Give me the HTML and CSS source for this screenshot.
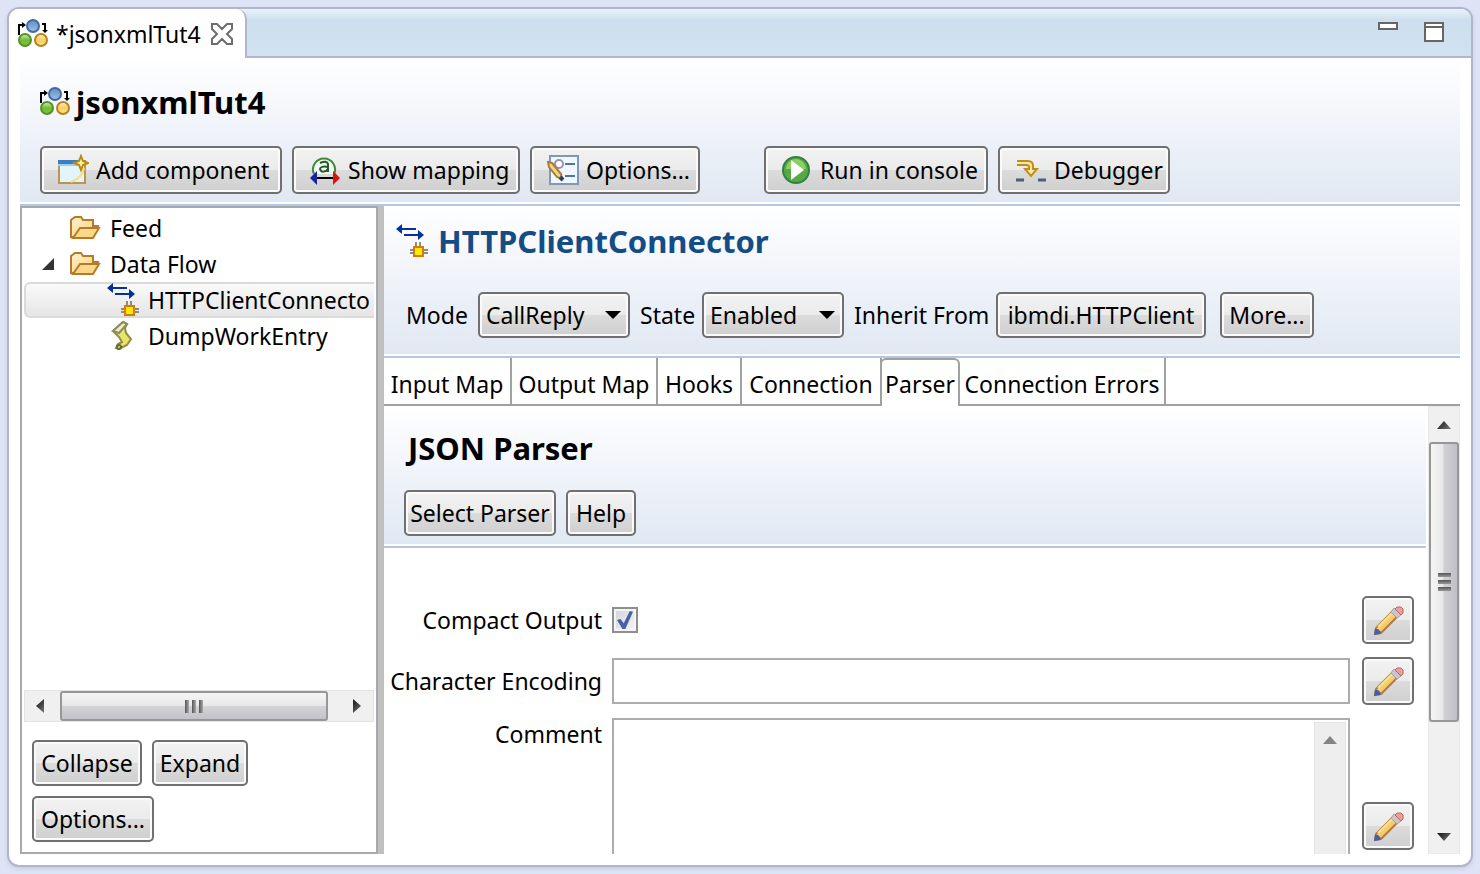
FILE: index.html
```html
<!DOCTYPE html>
<html lang="en">
<head>
    <meta charset="UTF-8">
    <meta name="viewport" content="width=device-width, initial-scale=1.0">
    <title>jsonxmlTut4</title>
    <link rel="stylesheet" href="styles.css">
</head>
<body>

    <!-- shared icons -->
    <svg class="sprite" width="0" height="0" aria-hidden="true">
        <defs>
            <linearGradient id="g-blue" x1="0" y1="0" x2="0" y2="1"><stop offset="0" stop-color="#5f8cc4"/><stop offset="1" stop-color="#9dc3e4"/></linearGradient>
            <linearGradient id="g-green" x1="0" y1="0" x2="0" y2="1"><stop offset="0" stop-color="#d5efb5"/><stop offset=".5" stop-color="#6fbd2c"/><stop offset="1" stop-color="#7cc63c"/></linearGradient>
            <linearGradient id="g-gold" x1="0" y1="0" x2="0" y2="1"><stop offset="0" stop-color="#fdf0b8"/><stop offset=".5" stop-color="#fbcf62"/><stop offset="1" stop-color="#fde391"/></linearGradient>
            <linearGradient id="g-folder" x1="0" y1="0" x2="1" y2="1"><stop offset="0" stop-color="#fff3cf"/><stop offset="1" stop-color="#f8cd73"/></linearGradient>
            <linearGradient id="g-pencil" x1="0" y1="0" x2="1" y2="1"><stop offset="0" stop-color="#fff0a0"/><stop offset="1" stop-color="#e9a93c"/></linearGradient>
        </defs>
        <symbol id="flow" viewBox="0 0 32 32">
            <path d="M2 17V7h5M25 6h3v8" fill="none" stroke="#000" stroke-width="2"/>
            <path d="M5 4l4 3-4 3zM25 12h6l-3 3z"/>
            <circle cx="16" cy="8" r="6" fill="url(#g-blue)" stroke="#4468a5" stroke-width="2"/>
            <circle cx="8" cy="22" r="6" fill="url(#g-green)" stroke="#55912c" stroke-width="2"/>
            <circle cx="24" cy="22" r="6" fill="url(#g-gold)" stroke="#b5841f" stroke-width="2"/>
        </symbol>
        <symbol id="connector" viewBox="0 0 34 38">
            <path d="M5 7h17M10 13h15" stroke="#06309c" stroke-width="2"/>
            <path d="M2 7l6-5v10zM30 13l-6-5v10z" fill="#06309c"/>
            <path d="M22 20v5M26 20v5M16 28h18M16 31h18" stroke="#8a8a8a" stroke-width="2"/>
            <rect x="20" y="25" width="9" height="9" fill="#ffea00" stroke="#d57b00" stroke-width="2"/>
        </symbol>
        <symbol id="folder" viewBox="0 0 32 26">
            <path d="M2 22V5l4-3h6l2 3h10v6h5l-5 11H3z" fill="url(#g-folder)" stroke="#b77a28" stroke-width="2"/>
            <path d="M4 23l7-10h19l-6 10z" fill="#fbd88a" stroke="#b77a28" stroke-width="2"/>
        </symbol>
        <symbol id="pencil" viewBox="0 0 32 32">
            <path d="M3 30l1-6L21 7l5 5L9 29z" fill="url(#g-pencil)" stroke="#b57a45" stroke-width="2"/>
            <path d="M6 23L20 9" stroke="#f9e48c" stroke-width="2"/>
            <path d="M19 8l3-4 7 7-4 3z" fill="#c4c7d2" stroke="#a2a4b4"/>
            <path d="M23 5l2-2h4l2 2v4l-2 2z" fill="#e9a09b" stroke="#c7625d"/>
            <path d="M2 31l1-6h3l3 3-1 2z" fill="#4560a8"/>
        </symbol>
    </svg>

    <div class="window">
        <div class="tabbar">
            <div class="file-tab">
                <svg class="icon"><use href="#flow"/></svg>
                <span>*jsonxmlTut4</span>
                <button class="close" aria-label="Close">
                    <svg width="22" height="22" viewBox="0 0 22 22"><path d="M1 1h5l5 5 5-5h5v5l-5 5 5 5v5h-5l-5-5-5 5H1v-5l5-5-5-5z" fill="#fff" stroke="#6d6d6d" stroke-width="2"/></svg>
                </button>
            </div>
            <div class="window-buttons">
                <button aria-label="Minimize"><svg width="20" height="20" viewBox="0 0 20 20"><rect x="1" y="1" width="18" height="6" fill="#fff" stroke="#666" stroke-width="2"/></svg></button>
                <button aria-label="Maximize"><svg width="20" height="20" viewBox="0 0 20 20"><path d="M1 1h18v18H1zM1 5h18" fill="#fff" stroke="#666" stroke-width="2"/></svg></button>
            </div>
        </div>

        <div class="editor">
            <header class="band main-head">
                <h1><svg class="icon"><use href="#flow"/></svg>jsonxmlTut4</h1>
                <div class="toolbar">
                    <button class="btn tool">
                        <svg class="icon" viewBox="0 0 32 32">
                            <rect x="2" y="7" width="26" height="22" fill="#e2f5fd" stroke="#b69650" stroke-width="2"/>
                            <path d="M1 6h20v6H1z" fill="#3b7fc0"/>
                            <path d="M1 10h20v2H1z" fill="#9dcdf0"/>
                            <path d="M27 14c-1 7-5 11-13 14" fill="none" stroke="#f6dc85" stroke-width="2"/>
                            <path d="M24 2l2 5 5 2-5 2-2 5-2-5-5-2 5-2z" fill="#fff0a0" stroke="#b58b11" stroke-width="2"/>
                        </svg>
                        Add component
                    </button>
                    <button class="btn tool">
                        <svg class="icon" viewBox="0 0 32 32">
                            <path d="M5 20a11 11 0 1 1 20 0" fill="#f3faf0" stroke="#3f8a3f" stroke-width="2"/>
                            <path d="M11 9q7-3 8 1v8M19 13c-5-1-8 0-8 2 1 4 6 3 8 0" fill="none" stroke="#235c28" stroke-width="2"/>
                            <path d="M8 24h16" stroke="#000" stroke-width="2"/>
                            <path d="M8 17v14l-7-7z" fill="#1724a5"/>
                            <path d="M24 17v14l7-7z" fill="#e00d0d"/>
                        </svg>
                        Show mapping
                    </button>
                    <button class="btn tool">
                        <svg class="icon" viewBox="0 0 32 32">
                            <rect x="3" y="2" width="28" height="28" fill="#eef8ff" stroke="#8296b8" stroke-width="2"/>
                            <circle cx="12" cy="10" r="4" fill="#fff" stroke="#9a92ad" stroke-width="2"/>
                            <path d="M18 10h10M18 22h10" stroke="#5871a5" stroke-width="2"/>
                            <path d="M1 8l4 1 9 11 1 5-5-2L2 13z" fill="#f8d489" stroke="#a97d39" stroke-width="2"/>
                            <path d="M13 23l3 3" stroke="#2d4262" stroke-width="4"/>
                        </svg>
                        Options...
                    </button>
                    <button class="btn tool run">
                        <svg class="icon" viewBox="0 0 32 32">
                            <circle cx="15" cy="16" r="13" fill="#58a943" stroke="#2f8247" stroke-width="2"/>
                            <path d="M5 15a10 10 0 0 1 20 0" fill="#8ecf62"/>
                            <path d="M10 6v20l13-10z" fill="#fff"/>
                        </svg>
                        Run in console
                    </button>
                    <button class="btn tool">
                        <svg class="icon" viewBox="0 0 32 32">
                            <path d="M2 7h11q5 0 5 5v3h4l-6 7-6-7h4v-2q0-2-3-2H2" fill="#fde9a4" stroke="#c18e1c" stroke-width="2"/>
                            <path d="M1 26h8M23 26h8" stroke="#4c5e7a" stroke-width="3"/>
                        </svg>
                        Debugger
                    </button>
                </div>
            </header>

            <div class="split">
                <aside class="sidebar">
                    <ul class="tree">
                        <li><span class="twist"></span><svg class="folder"><use href="#folder"/></svg>Feed</li>
                        <li><span class="twist open"></span><svg class="folder"><use href="#folder"/></svg>Data Flow</li>
                        <li class="leaf selected"><svg class="conn"><use href="#connector"/></svg>HTTPClientConnecto</li>
                        <li class="leaf">
                            <svg class="conn" viewBox="0 0 34 38">
                                <path d="M8 14L18 5l4 2-2 4 1 5 5 6-4 6-8 4-3-1 2-4 4-2-3-5z" fill="#e8e469" stroke="#8e8c45" stroke-width="2"/>
                                <path d="M8 14L18 5l4 2-8 9z" fill="#efedc4" stroke="#8e8c60" stroke-width="2"/>
                                <circle cx="14" cy="30" r="2" fill="#e9e320" stroke="#666b3c" stroke-width="2"/>
                            </svg>
                            DumpWorkEntry
                        </li>
                    </ul>
                    <div class="hscroll">
                        <span class="arrow left"></span>
                        <div class="thumb"><i></i><i></i><i></i></div>
                        <span class="arrow right"></span>
                    </div>
                    <div class="side-buttons">
                        <button class="btn collapse">Collapse</button>
                        <button class="btn expand">Expand</button>
                        <button class="btn options">Options...</button>
                    </div>
                </aside>

                <main class="detail">
                    <header class="band detail-head">
                        <h2><svg class="conn"><use href="#connector"/></svg>HTTPClientConnector</h2>
                        <div class="fields">
                            <label for="mode">Mode</label>
                            <span class="select"><select id="mode" class="btn"><option>CallReply</option></select></span>
                            <label for="state">State</label>
                            <span class="select"><select id="state" class="btn"><option>Enabled</option></select></span>
                            <label for="inherit">Inherit From</label>
                            <button id="inherit" class="btn">ibmdi.HTTPClient</button>
                            <button class="btn more">More...</button>
                        </div>
                    </header>

                    <nav class="tabs">
                        <a href="#">Input Map</a>
                        <a href="#">Output Map</a>
                        <a href="#">Hooks</a>
                        <a href="#">Connection</a>
                        <a href="#" class="active">Parser</a>
                        <a href="#">Connection Errors</a>
                    </nav>

                    <div class="panel">
                        <div class="panel-body">
                            <header class="band parser-head">
                                <h3>JSON Parser</h3>
                                <div class="parser-buttons">
                                    <button class="btn">Select Parser</button>
                                    <button class="btn">Help</button>
                                </div>
                            </header>
                            <form class="form">
                                <label for="compact">Compact Output</label>
                                <input type="checkbox" id="compact" checked>
                                <button type="button" class="btn edit" aria-label="Edit compact output"><svg class="icon"><use href="#pencil"/></svg></button>

                                <label for="encoding">Character Encoding</label>
                                <input type="text" id="encoding">
                                <button type="button" class="btn edit" aria-label="Edit character encoding"><svg class="icon"><use href="#pencil"/></svg></button>

                                <label for="comment" class="top">Comment</label>
                                <div class="comment">
                                    <textarea id="comment"></textarea>
                                    <div class="text-scroll"><span class="arrow up dim"></span></div>
                                </div>
                                <button type="button" class="btn edit" aria-label="Edit comment"><svg class="icon"><use href="#pencil"/></svg></button>
                            </form>
                        </div>
                        <div class="vscroll">
                            <span class="arrow up"></span>
                            <div class="thumb"><i></i><i></i><i></i></div>
                            <span class="arrow down"></span>
                        </div>
                    </div>
                </main>
            </div>
        </div>
    </div>

</body>
</html>
```

FILE: styles.css
```css
* {
    box-sizing: border-box;
}

body {
    margin: 0;
    padding: 7px;
    height: 100vh;
    background: #dfe3f6;
    color: #000;
    font-family: "Noto Sans", "Open Sans", sans-serif;
    font-size: 23px;
    line-height: 32px;
}

button, input, select, textarea {
    font: inherit;
    color: inherit;
}

h1, h2, h3, ul {
    margin: 0;
    padding: 0;
}

.sprite {
    position: absolute;
}

.icon {
    width: 32px;
    height: 32px;
    flex: none;
}

.window {
    display: flex;
    flex-direction: column;
    height: 100%;
    background: #fff;
    border: 2px solid #b2b6cc;
    border-radius: 12px;
    box-shadow: 0 2px 4px #c8cde2;
    overflow: hidden;
}

/* top tab bar */
.tabbar {
    display: flex;
    justify-content: space-between;
    flex: none;
    height: 49px;
    background: linear-gradient(#e9f2f9, #cddeee 25%, #d2e2f1);
    border-bottom: 2px solid #b2b6cc;
}

.file-tab {
    display: flex;
    align-items: center;
    height: 49px;
    padding: 0 12px 0 8px;
    background: #fff;
    border-right: 2px solid #b2b6cc;
    border-top-right-radius: 10px;
}

.file-tab span {
    margin-left: 7px;
}

.close, .window-buttons button {
    display: flex;
    padding: 0;
    border: 0;
    background: none;
}

.close {
    margin-left: 10px;
}

.window-buttons {
    display: flex;
    gap: 26px;
    padding: 13px 27px 0 0;
}

/* gradient headers */
.band {
    flex: none;
    background: linear-gradient(#fff, #f1f4fa 45%, #e0e8f3);
    border-bottom: 2px solid #b3c8df;
    box-shadow: inset 0 -2px #fff;
}

.editor {
    display: flex;
    flex-direction: column;
    flex: 1;
    min-height: 0;
    padding: 0 11px 11px;
}

.main-head {
    height: 148px;
    padding: 26px 20px 0 19px;
}

h1, h2, h3 {
    display: flex;
    align-items: center;
    font-size: 31px;
    line-height: 36px;
    font-weight: bold;
}

h1 {
    gap: 5px;
}

.toolbar {
    display: grid;
    grid-template-columns: 242px 228px 170px 278px 172px;
    gap: 10px;
    margin-top: 26px;
    padding-left: 1px;
}

.btn {
    display: flex;
    align-items: center;
    justify-content: center;
    height: 46px;
    padding: 0;
    border: 2px solid #707070;
    border-radius: 5px;
    background: linear-gradient(#f2f2f2, #ebebeb 50%, #dcdcdc 50%, #cfcfcf);
    box-shadow: inset 0 0 0 2px #fafafa;
    white-space: nowrap;
}

.tool {
    justify-content: flex-start;
    height: 48px;
    padding-left: 15px;
    gap: 7px;
}

.run {
    margin-left: 54px;
}

.split {
    display: flex;
    flex: 1;
    min-height: 0;
}

/* left tree */
.sidebar {
    display: flex;
    flex-direction: column;
    flex: none;
    width: 358px;
    padding: 2px;
    border: 2px solid #a7a9b2;
}

.tree {
    flex: 1;
    list-style: none;
}

.tree li {
    display: flex;
    align-items: center;
    height: 36px;
    padding-left: 18px;
    white-space: nowrap;
}

.tree .leaf {
    padding-left: 81px;
    gap: 9px;
}

.tree .selected {
    border: 2px solid #dadada;
    border-right: 0;
    border-radius: 6px 0 0 6px;
    background: linear-gradient(#fafafa, #e5e5e5);
    padding-left: 79px;
}

.twist {
    width: 12px;
    height: 12px;
    margin-right: 15px;
}

.twist.open {
    background: #333;
    clip-path: polygon(100% 0, 100% 100%, 0 100%);
}

.folder {
    width: 32px;
    height: 26px;
    margin-right: 9px;
}

.conn {
    width: 34px;
    height: 38px;
    flex: none;
}

.side-buttons {
    display: flex;
    flex-wrap: wrap;
    gap: 10px;
    padding: 18px 8px 8px;
}

.collapse {
    width: 110px;
}

.expand {
    width: 96px;
}

.options {
    width: 122px;
}

/* scroll bars */
.hscroll {
    display: flex;
    align-items: center;
    height: 32px;
    padding: 0 12px 0 11px;
    background: #f0f0f0;
    border: 1px solid #e4e4e4;
}

.arrow {
    flex: none;
    background: linear-gradient(135deg, #111, #777);
}

.arrow.left, .arrow.right {
    width: 8px;
    height: 14px;
}

.arrow.left {
    clip-path: polygon(0 50%, 100% 0, 100% 100%);
}

.arrow.right {
    clip-path: polygon(0 0, 100% 50%, 0 100%);
}

.arrow.up, .arrow.down {
    width: 14px;
    height: 8px;
}

.arrow.up {
    clip-path: polygon(50% 0, 100% 100%, 0 100%);
}

.arrow.down {
    clip-path: polygon(0 0, 100% 0, 50% 100%);
}

.arrow.dim {
    background: #848484;
}

.thumb {
    display: flex;
    align-items: center;
    justify-content: center;
    gap: 3px;
    border: 2px solid #979797;
    border-radius: 3px;
}

.hscroll .thumb {
    flex: 1;
    height: 30px;
    margin: 0 25px 0 16px;
    background: linear-gradient(#f5f5f5, #e8e8eb 48%, #d2d2d7 52%, #c2c2c8);
}

.hscroll .thumb i {
    width: 4px;
    height: 13px;
    background: linear-gradient(90deg, #555, #aaa);
}

.vscroll {
    display: flex;
    flex-direction: column;
    align-items: center;
    flex: none;
    width: 32px;
    margin-left: 2px;
    padding: 14px 0 12px;
    background: #f0f0f0;
    border: 1px solid #e8e8e8;
}

.vscroll .thumb {
    flex-direction: column;
    width: 30px;
    height: 280px;
    margin: 13px 0 auto;
    background: linear-gradient(90deg, #f5f5f5, #e8e8eb 45%, #d0d0d5 50%, #bfbfc5);
}

.vscroll .thumb i {
    width: 13px;
    height: 4px;
    background: linear-gradient(#555, #999);
}

/* connector details */
.detail {
    display: flex;
    flex-direction: column;
    flex: 1;
    min-width: 0;
    border-left: 6px solid #c0c0c0;
}

.detail-head {
    height: 152px;
    padding: 15px 10px 0;
}

h2 {
    gap: 10px;
    height: 40px;
    color: #154c86;
}

.fields {
    display: grid;
    grid-template-columns: 62px 152px 52px 142px 132px 210px 98px;
    align-items: center;
    gap: 10px;
    margin-top: 31px;
    padding-left: 12px;
    white-space: nowrap;
}

.more {
    margin-left: 4px;
}

.select {
    position: relative;
}

.select::after {
    content: "";
    position: absolute;
    top: 19px;
    right: 9px;
    border: 8px solid transparent;
    border-top-color: #000;
    border-bottom: 0;
    pointer-events: none;
}

.select select {
    width: 100%;
    padding: 0 6px;
    appearance: none;
}

.tabs {
    display: grid;
    grid-template-columns: 128px 146px 84px 140px 78px 206px;
    flex: none;
    height: 48px;
    border-bottom: 2px solid #a0a0a0;
}

.tabs a {
    height: 46px;
    padding-top: 10px;
    border-right: 2px solid #a0a0a0;
    color: #000;
    text-align: center;
    text-decoration: none;
    white-space: nowrap;
}

.tabs .active {
    height: 48px;
    margin-left: -2px;
    padding-top: 8px;
    background: #fff;
    border: 2px solid #a0a0a0;
    border-bottom: 0;
    border-radius: 6px 6px 0 0;
}

.panel {
    display: flex;
    flex: 1;
    min-height: 0;
}

.panel-body {
    flex: 1;
    overflow: hidden;
}

.parser-head {
    height: 142px;
    padding: 24px 20px 0;
}

h3 {
    padding-left: 4px;
}

.parser-buttons {
    display: grid;
    grid-template-columns: 152px 70px;
    gap: 10px;
    margin-top: 24px;
}

.form {
    display: grid;
    grid-template-columns: 216px 1fr 52px;
    align-items: center;
    column-gap: 12px;
    row-gap: 13px;
    padding: 48px 12px 0 0;
}

.form label {
    text-align: right;
    margin-right: -2px;
}

.form .top {
    align-self: start;
}

.form input[type="text"], .form textarea {
    width: 100%;
    border: 2px solid #abadb3;
    background: #fff;
}

.form input[type="text"] {
    height: 46px;
    padding: 0 8px;
}

.form input[type="checkbox"] {
    display: grid;
    place-items: center;
    width: 26px;
    height: 26px;
    margin: 0;
    appearance: none;
    border: 2px solid #8e8f8f;
    background: linear-gradient(135deg, #cfd3da, #f6f6f6);
    box-shadow: inset 0 0 0 2px #f4f4f4;
}

.form input[type="checkbox"]:checked::before {
    content: "";
    width: 16px;
    height: 18px;
    background: #4860a4;
    clip-path: polygon(0 50%, 22% 44%, 42% 68%, 80% 0, 100% 4%, 52% 100%, 34% 100%);
}

.comment {
    position: relative;
    height: 216px;
}

.form textarea {
    display: block;
    height: 100%;
    padding: 4px 40px 4px 8px;
    resize: none;
}

.text-scroll {
    position: absolute;
    top: 4px;
    right: 4px;
    bottom: 4px;
    display: flex;
    justify-content: center;
    width: 32px;
    padding-top: 13px;
    background: #eee;
    border: 1px solid #e4e4e4;
}

.edit {
    height: 48px;
}
```
